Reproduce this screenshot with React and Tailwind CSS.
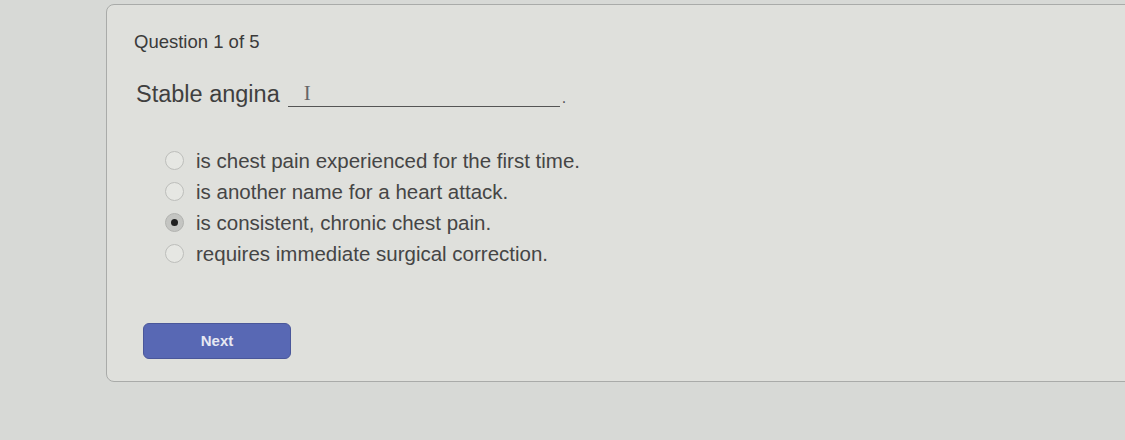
import { useState } from 'react'

const options = [
  'is chest pain experienced for the first time.',
  'is another name for a heart attack.',
  'is consistent, chronic chest pain.',
  'requires immediate surgical correction.',
]

export default function App() {
  const [picked, setPicked] = useState(2)

  return (
    <div className="w-[1125px] h-[440px] overflow-hidden bg-[#d7d9d6] pt-[4px] pl-[106px] font-['Liberation_Sans',Arial,sans-serif]">
      <div className="w-[1040px] h-[378px] bg-[#dfe0dc] border border-[#a9aba9] rounded-l-[8px] pt-[26px] pl-[27px]">
        <p className="text-[18.5px] text-[#3a3a3a] leading-[22px]">Question 1 of 5</p>

        {/* Prompt with blank */}
        <div className="flex items-end mt-[28px] pl-[2px]">
          <span className="text-[23.5px] text-[#3f3f3f] leading-[26px]">Stable angina</span>
          <span className="relative ml-[8px] w-[272px] h-[26px] border-b border-[#555]">
            <span className="absolute left-[16px] top-[1px] text-[21px] leading-[22px] text-[#666] font-['Liberation_Serif',serif]">I</span>
          </span>
          <span className="text-[16px] text-[#555] leading-[18px] ml-[2px]">.</span>
        </div>

        {/* Options */}
        <div className="flex flex-col mt-[38px] pl-[31px]">
          {options.map((o, i) => (
            <label key={i} className="flex items-center h-[31px] cursor-pointer" onClick={() => setPicked(i)}>
              <span
                className={`flex items-center justify-center w-[19px] h-[19px] rounded-full border ${
                  picked === i ? 'bg-[#c4c5c2] border-[#b2b3b0]' : 'bg-[#e6e7e3] border-[#bdbebb]'
                }`}
              >
                {picked === i && <span className="w-[7px] h-[7px] rounded-full bg-[#1f1f1f]" />}
              </span>
              <span className="ml-[12px] text-[20.5px] text-[#454545] leading-[24px]">{o}</span>
            </label>
          ))}
        </div>

        <button className="mt-[54px] ml-[9px] w-[148px] h-[36px] rounded-[6px] bg-[#5868b4] border border-[#4a579a] text-[#e6e8f2] text-[15px] font-bold">
          Next
        </button>
      </div>
    </div>
  )
}
